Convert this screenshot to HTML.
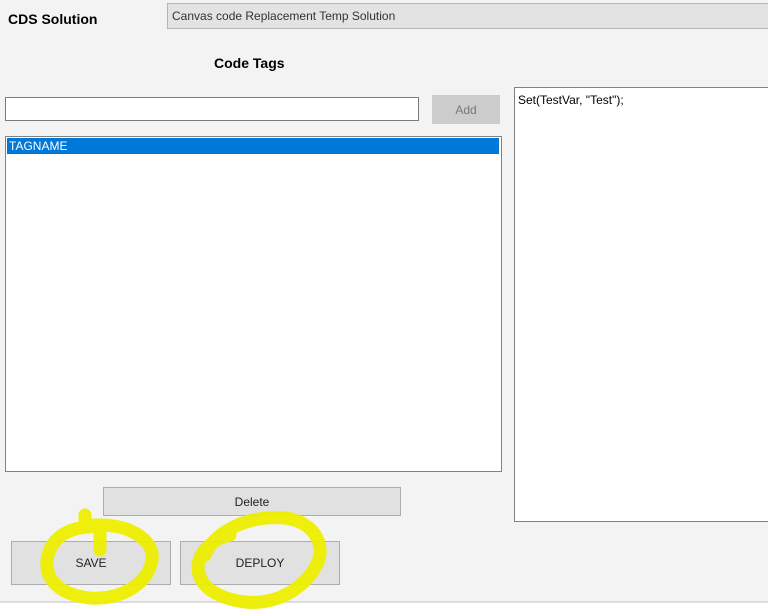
<!DOCTYPE html>
<html><head><style>
body{margin:0;width:768px;height:616px;background:#f3f3f3;position:relative;overflow:hidden;font-family:"Liberation Sans",sans-serif;font-size:12px;color:#000}
div{position:absolute;box-sizing:border-box}
.btn{background:#e1e1e1;border:1px solid #adadad;display:flex;align-items:center;justify-content:center;color:#222}
</style></head><body>
<div style="left:8px;top:11px;font-weight:bold;font-size:14px">CDS Solution</div>
<div style="left:167px;top:3px;width:610px;height:26px;background:#e3e3e3;border:1px solid #b5b5b5;padding:5px 0 0 4px;color:#333">Canvas code Replacement Temp Solution</div>
<div style="left:214px;top:55px;font-weight:bold;font-size:14px">Code Tags</div>
<div style="left:5px;top:97px;width:414px;height:24px;background:#fff;border:1px solid #7a7a7a"></div>
<div class="btn" style="left:432px;top:95px;width:68px;height:29px;background:#cccccc;border-color:#cccccc;color:#777">Add</div>
<div style="left:5px;top:136px;width:497px;height:336px;background:#fff;border:1px solid #828282"></div>
<div style="left:7px;top:138px;width:492px;height:16px;background:#0078d7;color:#fff;padding:1px 0 0 2px">TAGNAME</div>
<div style="left:514px;top:87px;width:260px;height:435px;background:#fff;border:1px solid #828282;padding:5px 0 0 3px">Set(TestVar, "Test");</div>
<div class="btn" style="left:103px;top:487px;width:298px;height:29px">Delete</div>
<div class="btn" style="left:11px;top:541px;width:160px;height:44px">SAVE</div>
<div class="btn" style="left:180px;top:541px;width:160px;height:44px">DEPLOY</div>
<div style="left:0;top:601px;width:768px;height:2px;background:#dcdcdc"></div>
<div style="left:0;top:603px;width:768px;height:13px;background:#fff"></div>
<svg style="position:absolute;left:0;top:0" width="768" height="616">
<g fill="none" stroke="#eeee00" stroke-width="13" stroke-linecap="round" stroke-linejoin="round" opacity="0.95">
<path d="M85 515 L85 525 L100 525 L100 550 M100 525 C130 525 155 540 152 560 C148 585 120 600 90 598 C60 595 45 580 47 560 C50 540 65 528 90 527"/>
<path d="M205 555 C215 530 250 515 285 518 C315 522 325 545 318 562 C305 590 275 605 245 602 C215 598 197 585 198 565 C200 550 215 538 230 535"/>
</g>
</svg>
</body></html>
